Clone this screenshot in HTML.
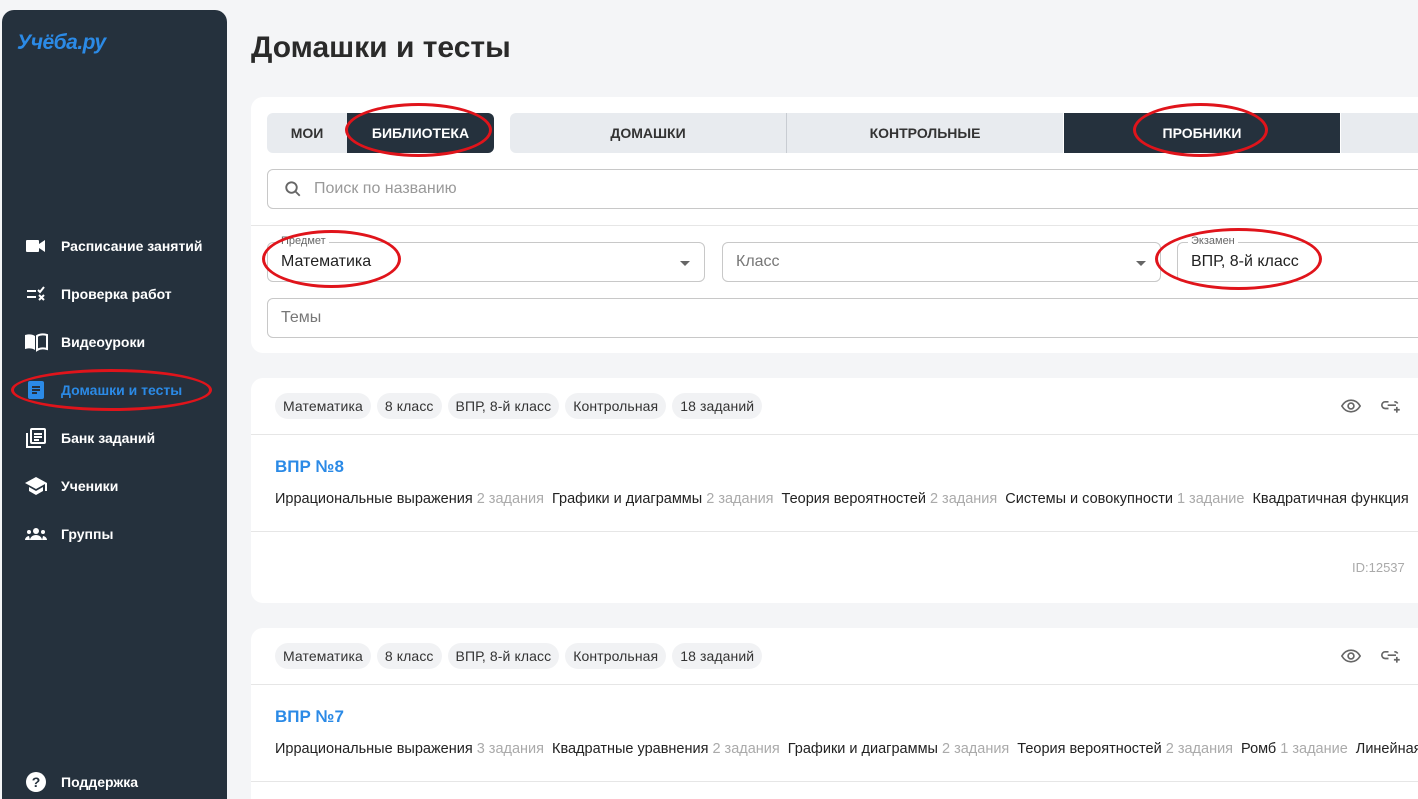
<!DOCTYPE html><html><head><meta charset="utf-8"><style>
*{box-sizing:border-box;margin:0;padding:0}
html{width:1418px;height:799px;overflow:hidden}
body{width:1418px;height:799px;overflow:hidden;background:#f4f5f7;font-family:"Liberation Sans",sans-serif;position:relative;color:#222}
.a{position:absolute}
.sb{left:2px;top:10px;width:225px;height:789px;background:#25313d;border-radius:12px 12px 0 0}
.logo{left:17px;top:31px;color:#2b8ae6;font:italic bold 21px "Liberation Sans",sans-serif;letter-spacing:-0.5px}
.it{left:61px;color:#fff;font-size:14px;font-weight:bold;transform:translateY(-50%)}
.ic{left:24px;width:24px;height:24px;transform:translateY(-50%)}
.card{background:#fff;border-radius:12px;left:251px;width:1200px}
.tab{top:113px;height:40px;background:#e8ebef;font-size:14px;font-weight:bold;color:#333;display:flex;align-items:center;justify-content:center}
.dk{background:#25313d;color:#fff}
.inp{border:1px solid #c8c8c8;border-radius:6px;height:40px;font-size:16px;color:#777;display:flex;align-items:center;padding-left:13px}
.lbl{font-size:11px;color:#666;background:#fff;padding:0 3px;top:-8px;left:10px}
.arr{width:0;height:0;border-left:5px solid transparent;border-right:5px solid transparent;border-top:5px solid #666;top:18px}
.chip{background:#f1f2f4;border-radius:13px;height:26px;font-size:14px;padding:0 8px;display:inline-flex;align-items:center;margin-right:6px;color:#333;letter-spacing:0.1px}
.hr{height:1px;background:#e6e6e6;left:0;right:0}
.t{font-size:17px;color:#2b8ae6;left:24px;transform:translateY(-50%);font-weight:bold}
.tp{font-size:14.5px;left:24px;white-space:nowrap;transform:translateY(-50%)}
.tp span{color:#aaa;margin-right:8px}
.el{border:3px solid #e0141b;border-radius:50%}
</style></head><body>
<div class="a sb"></div>
<div class="a logo">Учёба.ру</div>
<svg class="a ic" style="top:246px" viewBox="0 0 24 24"><rect x="2" y="6" width="13" height="12" rx="1" fill="#fff"/><path d="M15 10l6-4v12l-6-4z" fill="#fff"/></svg>
<div class="a it" style="top:246px">Расписание занятий</div>
<svg class="a ic" style="top:294px" viewBox="0 0 24 24" stroke="#fff" stroke-width="2" fill="none"><path d="M3 9h9M3 15h9M14 8l2 2 4-5M15 13l5 5M20 13l-5 5"/></svg>
<div class="a it" style="top:294px">Проверка работ</div>
<svg class="a ic" style="top:342px" viewBox="0 0 24 24"><path d="M1 5c4-1 7-1 10 1v14c-3-2-6-2-10-1z" fill="#fff"/><path d="M13 6c3-2 6-2 10-1v14c-4-1-7-1-10 1z" fill="none" stroke="#fff" stroke-width="2"/></svg>
<div class="a it" style="top:342px">Видеоуроки</div>
<svg class="a ic" style="top:390px" viewBox="0 0 24 24"><rect x="4" y="3" width="16" height="18" rx="2" fill="#2b8ae6"/><path d="M8 9h8M8 12h8M8 15h5" stroke="#25313d" stroke-width="2"/></svg>
<div class="a it" style="top:390px;color:#2b8ae6">Домашки и тесты</div>
<svg class="a ic" style="top:438px" viewBox="0 0 24 24" fill="none" stroke="#fff" stroke-width="2"><rect x="7" y="3" width="14" height="14" rx="1"/><path d="M3 7v14h14M10 8h8M10 11h8M10 14h5"/></svg>
<div class="a it" style="top:438px">Банк заданий</div>
<svg class="a ic" style="top:486px" viewBox="0 0 24 24" fill="#fff"><path d="M12 3L1 9l11 6 9-5v7h2V9z"/><path d="M5 13v4l7 4 7-4v-4l-7 4z"/></svg>
<div class="a it" style="top:486px">Ученики</div>
<svg class="a ic" style="top:534px" viewBox="0 0 24 24" fill="#fff"><circle cx="12" cy="9" r="3"/><circle cx="5" cy="10" r="2"/><circle cx="19" cy="10" r="2"/><path d="M6 18c0-3 3-5 6-5s6 2 6 5zM1 18c0-2 2-4 4-4l1 4zM23 18c0-2-2-4-4-4l-1 4z"/></svg>
<div class="a it" style="top:534px">Группы</div>
<svg class="a ic" style="top:782px" viewBox="0 0 24 24"><circle cx="12" cy="12" r="10" fill="#fff"/><text x="12" y="17" text-anchor="middle" font-size="14" font-weight="bold" fill="#25313d" font-family="Liberation Sans">?</text></svg>
<div class="a it" style="top:782px">Поддержка</div>

<div class="a" style="left:251px;top:31px;font-size:30px;font-weight:bold;color:#2a2a2a">Домашки и тесты</div>

<div class="a card" style="top:97px;height:256px">
<div class="a hr" style="top:128px"></div>
</div>
<div class="a tab" style="left:267px;width:80px;border-radius:6px 0 0 6px">МОИ</div>
<div class="a tab dk" style="left:347px;width:147px;border-radius:0 6px 6px 0">БИБЛИОТЕКА</div>
<div class="a tab" style="left:510px;width:276px;border-radius:6px 0 0 6px">ДОМАШКИ</div>
<div class="a tab" style="left:787px;width:276px">КОНТРОЛЬНЫЕ</div>
<div class="a tab dk" style="left:1064px;width:276px">ПРОБНИКИ</div>
<div class="a tab" style="left:1341px;width:100px"></div>
<div class="a" style="left:786px;top:113px;width:1px;height:40px;background:#c8ccd2"></div>
<div class="a inp" style="left:267px;top:169px;width:1200px;padding-left:46px;color:#999">Поиск по названию</div>
<svg class="a" style="left:284px;top:180px" width="18" height="18" viewBox="0 0 24 24" fill="none" stroke="#666" stroke-width="2.5"><circle cx="10" cy="10" r="7"/><path d="M15 15l6 6"/></svg>
<div class="a inp" style="left:267px;top:242px;width:438px;color:#222">Математика<div class="a lbl">Предмет</div><div class="a arr" style="left:412px"></div></div>
<div class="a inp" style="left:722px;top:242px;width:439px">Класс<div class="a arr" style="left:413px"></div></div>
<div class="a inp" style="left:1177px;top:242px;width:300px;color:#222">ВПР, 8-й класс<div class="a lbl">Экзамен</div></div>
<div class="a inp" style="left:267px;top:298px;width:1200px">Темы</div>

<div class="a card" style="top:378px;height:225px">
<div class="a" style="left:24px;top:15px"><span class="chip">Математика</span><span class="chip">8 класс</span><span class="chip">ВПР, 8-й класс</span><span class="chip">Контрольная</span><span class="chip">18 заданий</span></div>
<div class="a hr" style="top:56px"></div>
<div class="a t" style="top:89px">ВПР №8</div>
<div class="a tp" style="top:121px">Иррациональные выражения <span>2 задания</span>Графики и диаграммы <span>2 задания</span>Теория вероятностей <span>2 задания</span>Системы и совокупности <span>1 задание</span>Квадратичная функция</div>
<div class="a hr" style="top:153px"></div>
<div class="a" style="left:1101px;top:182px;font-size:13px;color:#aaa">ID:12537</div>
</div>
<div class="a card" style="top:628px;height:200px">
<div class="a" style="left:24px;top:15px"><span class="chip">Математика</span><span class="chip">8 класс</span><span class="chip">ВПР, 8-й класс</span><span class="chip">Контрольная</span><span class="chip">18 заданий</span></div>
<div class="a hr" style="top:56px"></div>
<div class="a t" style="top:89px">ВПР №7</div>
<div class="a tp" style="top:121px">Иррациональные выражения <span>3 задания</span>Квадратные уравнения <span>2 задания</span>Графики и диаграммы <span>2 задания</span>Теория вероятностей <span>2 задания</span>Ромб <span>1 задание</span>Линейная</div>
<div class="a hr" style="top:153px"></div>
</div>
<svg class="a" style="left:1341px;top:398px" width="20" height="16" viewBox="0 0 24 18" fill="none" stroke="#666" stroke-width="2"><path d="M1 9c3-5 7-7 11-7s8 2 11 7c-3 5-7 7-11 7S4 14 1 9z"/><circle cx="12" cy="9" r="3.5"/></svg>
<svg class="a" style="left:1381px;top:398px" width="20" height="16" viewBox="0 0 24 18" fill="none" stroke="#666" stroke-width="2"><path d="M9 4H5a4 4 0 000 8h4M8 8h10M16 4h1a4 4 0 013 2M19 10v7M15.5 13.5h7"/></svg>
<svg class="a" style="left:1341px;top:648px" width="20" height="16" viewBox="0 0 24 18" fill="none" stroke="#666" stroke-width="2"><path d="M1 9c3-5 7-7 11-7s8 2 11 7c-3 5-7 7-11 7S4 14 1 9z"/><circle cx="12" cy="9" r="3.5"/></svg>
<svg class="a" style="left:1381px;top:648px" width="20" height="16" viewBox="0 0 24 18" fill="none" stroke="#666" stroke-width="2"><path d="M9 4H5a4 4 0 000 8h4M8 8h10M16 4h1a4 4 0 013 2M19 10v7M15.5 13.5h7"/></svg>

<div class="a el" style="left:11px;top:369px;width:201px;height:42px"></div>
<div class="a el" style="left:345px;top:103px;width:147px;height:54px"></div>
<div class="a el" style="left:1133px;top:103px;width:135px;height:54px"></div>
<div class="a el" style="left:262px;top:230px;width:139px;height:58px"></div>
<div class="a el" style="left:1155px;top:228px;width:167px;height:62px"></div>
</body></html>
